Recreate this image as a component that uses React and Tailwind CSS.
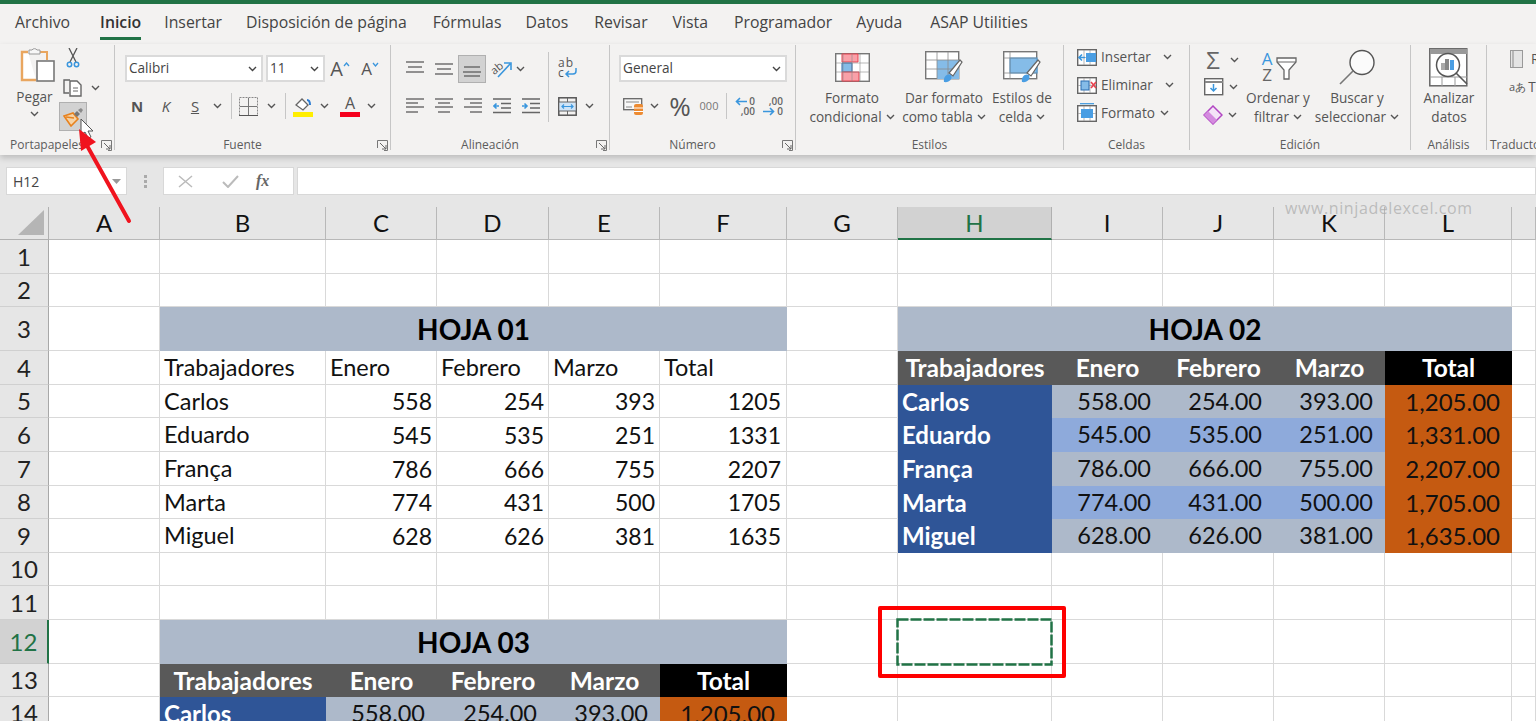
import React from "react";

const Svg = ({ w, h, children, className = "" }) => (
  <svg width={w} height={h} viewBox={`0 0 ${w} ${h}`} fill="none" className={"block shrink-0 " + className}>
    {children}
  </svg>
);
const B = "#3a96dd";
const Chev = ({ c = "#555", className = "" }) => (
  <Svg w={9} h={6} className={className}><path d="M1 1l3.5 3.5L8 1" stroke={c} strokeWidth="1.4" /></Svg>
);
const Launcher = () => (
  <Svg w={11} h={11}><path d="M.5 8V.5H10.5V10.5H7" stroke="#777" /><path d="M3 3l6 6M9 5v4H5" stroke="#666" /></Svg>
);

const Paste = () => (
  <Svg w={36} h={38}>
    <path d="M8 6H2v28h14" stroke="#e9a65f" strokeWidth="2.4" fill="#fff" />
    <path d="M20 6h7v8" stroke="#e9a65f" strokeWidth="2" />
    <path d="M9 8V4h3a3 3 0 0 1 5 0h3v4z" fill="#f7f7f7" stroke="#999" />
    <rect x="17" y="15" width="17" height="20" fill="#fff" stroke="#777" strokeWidth="1.6" />
  </Svg>
);
const Scissors = () => (
  <Svg w={14} h={20}>
    <path d="M3 0l7 14M11 0L4 14" stroke="#555" strokeWidth="1.3" />
    <circle cx="3.5" cy="16.5" r="2.2" stroke={B} strokeWidth="1.5" />
    <circle cx="10.5" cy="16.5" r="2.2" stroke={B} strokeWidth="1.5" />
  </Svg>
);
const Copy = () => (
  <Svg w={20} h={19}>
    <path d="M7 2H1v13h5" stroke="#666" strokeWidth="1.4" />
    <path d="M7 3h7l4 4v11H7z" fill="#fff" stroke="#666" strokeWidth="1.4" />
    <path d="M10 10h5M10 13h5" stroke="#666" />
  </Svg>
);
const Painter = () => (
  <Svg w={21} h={20}>
    <path d="M1 9l9-3 5 6-7 7z" fill="#f6d3a6" stroke="#e8821e" strokeWidth="1.6" />
    <path d="M3 10l8 1" stroke="#e8821e" strokeWidth="1.4" />
    <path d="M11 7l3-3 3 3-3 3z" fill="#777" />
    <path d="M15 3l3-2 2 2-2 3z" fill="#8a8a8a" />
  </Svg>
);
const Cursor = () => (
  <Svg w={16} h={22}>
    <path d="M1 1v16l4-3 3 6 3-1-3-6h5z" fill="#fff" stroke="#555" />
  </Svg>
);
const FontBig = ({ up }) => (
  <div className="flex items-start">
    <span className={(up ? "text-[20px]" : "text-[17px]") + " leading-[22px] text-[#555]"}>A</span>
    <Svg w={7} h={5} className="mt-1">
      <path d={up ? "M1 4l2.5-3L6 4" : "M1 1l2.5 3L6 1"} stroke={B} strokeWidth="1.3" />
    </Svg>
  </div>
);
const Borders = () => (
  <Svg w={19} h={19}>
    <rect x=".5" y=".5" width="18" height="18" stroke="#888" strokeDasharray="2 1" />
    <path d="M9.5 1v17M1 9.5h17" stroke="#777" />
    <path d="M0 18.5h19" stroke="#555" />
  </Svg>
);
const Fill = () => (
  <Svg w={20} h={21}>
    <path d="M3 9l6-6 6 6-5 5z" fill="#fff" stroke="#666" strokeWidth="1.3" />
    <path d="M14 4c2 0 3 2 3 5" stroke="#2b7cd3" strokeWidth="2" />
    <rect x="0" y="16" width="20" height="5" fill="#ffee00" />
  </Svg>
);
const FontColor = () => (
  <div className="flex flex-col items-center w-[20px]">
    <span className="text-[16px] leading-[16px] text-[#555]">A</span>
    <div className="w-[20px] h-[5px] bg-[#f5001d] mt-[1px]" />
  </div>
);
const Lines = ({ ws }) => (
  <Svg w={18} h={18}>
    {ws.map(([x, wd, y], i) => (
      <path key={i} d={`M${x} ${y}h${wd}`} stroke="#666" strokeWidth="1.4" />
    ))}
  </Svg>
);
const AlignBtn = ({ kind }) => {
  const s = {
    t: [[0, 18, 2], [2, 14, 7], [0, 18, 12]],
    m: [[0, 18, 4], [2, 14, 9], [0, 18, 14]],
    b: [[1, 16, 7], [0, 18, 12], [1, 16, 16]],
    l: [[0, 18, 2], [0, 12, 6], [0, 18, 10], [0, 12, 15]],
    c: [[0, 18, 2], [3, 12, 6], [0, 18, 10], [3, 12, 15]],
    r: [[0, 18, 2], [6, 12, 6], [0, 18, 10], [6, 12, 15]],
  }[kind];
  return <Lines ws={s} />;
};
const Indent = ({ rev }) => (
  <Svg w={18} h={18}>
    <path d="M0 2h18M8 6.5h10M8 11h10M0 15.5h18" stroke="#666" strokeWidth="1.4" />
    <path d={rev ? "M6 9H1m2.5-2.5L1 9l2.5 2.5" : "M0 9h5m-2.5-2.5L5 9l-2.5 2.5"} stroke={B} strokeWidth="1.6" />
  </Svg>
);
const Orient = () => (
  <Svg w={22} h={20}>
    <text x="0" y="13" transform="rotate(-40 6 10)" fontSize="11" fill="#555" fontFamily="Open Sans">ab</text>
    <path d="M7 18L19 5M13 4h7v7" stroke={B} strokeWidth="1.6" />
  </Svg>
);
const Wrap = () => (
  <div className="relative w-[20px] h-[22px] text-[12px] leading-[10px] text-[#555]">
    <div className="tracking-[1px]">ab</div>
    <div>c</div>
    <Svg w={14} h={10} className="absolute right-0 bottom-[2px]">
      <path d="M12 0v3a3 3 0 0 1-3 3H2m3-3L2 6l3 3" stroke={B} strokeWidth="1.5" />
    </Svg>
  </div>
);
const Merge = () => (
  <Svg w={19} h={19}>
    <rect x=".8" y=".8" width="17.4" height="17.4" stroke="#555" strokeWidth="1.5" />
    <rect x="1.5" y="5" width="16" height="9" fill="#cfe4f7" />
    <path d="M1 5h17M1 14h17M9.5 1v4M9.5 14v4" stroke="#666" />
    <path d="M4 9.5h11M6 7.5l-2 2 2 2M13 7.5l2 2-2 2" stroke={B} strokeWidth="1.2" />
  </Svg>
);
const Currency = () => (
  <Svg w={21} h={17}>
    <rect x=".7" y=".7" width="18" height="11" fill="#f8f8f8" stroke="#666" strokeWidth="1.3" />
    <path d="M3 4h13M3 9h6" stroke="#888" />
    <rect x="11" y="6" width="9" height="11" rx="2" fill="#ed8b32" />
    <path d="M11 10h9M11 13.5h9" stroke="#fff" />
  </Svg>
);
const DecUp = ({ rev }) => (
  <div className="relative w-[20px] h-[19px] text-[10px] leading-[9px] text-[#666] font-semibold text-right">
    <div>{rev ? ",00" : "0"}</div>
    <div className="mt-[1px]">{rev ? "0" : ",00"}</div>
    <Svg w={12} h={9} className={"absolute left-0 " + (rev ? "bottom-0" : "top-0")}>
      <path d={rev ? "M0 4.5h10M7 1l3.5 3.5L7 8" : "M12 4.5H2M5 1L1.5 4.5 5 8"} stroke={B} strokeWidth="1.6" />
    </Svg>
  </div>
);
const CondFormat = () => (
  <Svg w={35} h={29}>
    <rect x=".7" y=".7" width="33.6" height="27.6" fill="#fff" stroke="#777" strokeWidth="1.4" />
    <path d="M7 1h16v8H7z" fill="#f9a0a8" stroke="#e8414e" />
    <path d="M7 10h10v9H7z" fill="#85bce8" stroke="#2b6cb0" />
    <path d="M7 19h17v9H7z" fill="#f9a0a8" stroke="#e8414e" />
    <path d="M1 10h33M1 19h33M8 1v27M17 1v27M25 1v27" stroke="#8a8a8a" strokeWidth=".6" />
  </Svg>
);
const Brush = () => (
  <g>
    <path d="M24 22L35 9l2 2-9 14z" fill="#fff" stroke="#666" strokeWidth="1.2" />
    <path d="M19 31c-1-5 3-9 7-7 2 4-2 8-7 7z" fill="#4a9ee3" />
  </g>
);
const TableFmt = () => (
  <Svg w={38} h={33}>
    <rect x=".7" y=".7" width="33" height="27" fill="#fff" stroke="#777" strokeWidth="1.4" />
    <rect x="12" y="9" width="22" height="19" fill="#85bce8" />
    <path d="M1 9h33M1 18h33M12 1v27M23 1v27" stroke="#8a8a8a" strokeWidth=".8" />
    <Brush />
  </Svg>
);
const CellStyle = () => (
  <Svg w={38} h={33}>
    <rect x=".7" y=".7" width="33" height="27" fill="#fff" stroke="#777" strokeWidth="1.4" />
    <rect x="7" y="7" width="27" height="15" fill="#85bce8" stroke="#3a96dd" />
    <path d="M1 7h33M1 22h33M7 1v27" stroke="#8a8a8a" strokeWidth=".8" />
    <Brush />
  </Svg>
);
const CellIco = ({ kind }) => (
  <Svg w={20} h={20}>
    <rect x=".7" y="2.7" width="18.6" height="15.6" fill="#fff" stroke="#666" strokeWidth="1.4" />
    <path d="M7 3v15M13 3v15M1 10.500h18" stroke="#999" strokeWidth=".7" />
    {kind === "ins" && (
      <>
        <rect x="9" y="6" width="10" height="9" fill="#4a9ee3" />
        <path d="M8 10.500H2m3-3l-3 3 3 3" stroke="#3a96dd" strokeWidth="1.6" />
      </>
    )}
    {kind === "del" && (
      <>
        <rect x="4" y="6" width="8" height="9" fill="#85bce8" stroke="#2b6cb0" />
        <path d="M14 7l5 6M19 7l-5 6" stroke="#e8414e" strokeWidth="1.6" />
      </>
    )}
    {kind === "fmt" && (
      <>
        <rect x="4" y="6" width="12" height="9" fill="#4a9ee3" />
        <path d="M3 .700h14" stroke={B} strokeWidth="1.2" />
      </>
    )}
  </Svg>
);
const SortIco = () => (
  <div className="flex items-end">
    <div className="flex flex-col items-center w-[15px] text-[17px] leading-[16px]">
      <span className="text-[#3a96dd]">A</span>
      <span className="text-[#666]">Z</span>
    </div>
    <Svg w={21} h={24} className="ml-[1px] mb-[2px]">
      <path d="M1 1h19v4l-7 8v9h-5v-9L1 5z" fill="#fff" stroke="#666" strokeWidth="1.3" />
      <path d="M1 5h19" stroke="#666" />
    </Svg>
  </div>
);
const SearchIco = () => (
  <Svg w={37} h={37}>
    <circle cx="23" cy="13.500" r="12" fill="#fbfbfb" stroke="#555" strokeWidth="1.4" />
    <path d="M14 22L1 35" stroke="#777" strokeWidth="1.6" />
  </Svg>
);
const Analyze = () => (
  <Svg w={40} h={39}>
    <rect x=".8" y=".8" width="37" height="37" fill="#fff" stroke="#666" strokeWidth="1.5" />
    <rect x="1" y="1" width="37" height="5" fill="#999" />
    <path d="M1 29h37M13 29v9M26 29v9" stroke="#999" />
    <circle cx="19" cy="17" r="11.500" fill="#fff" stroke="#555" strokeWidth="1.5" />
    <rect x="12" y="15" width="4" height="7" fill="#aaa" />
    <rect x="16" y="11" width="4" height="11" fill="#888" />
    <rect x="21" y="12" width="4" height="10" fill="#4a9ee3" />
    <path d="M27 25l11 11" stroke="#555" strokeWidth="1.6" />
  </Svg>
);

const Group = ({ w, label, launcher, children, left }) => (
  <div className={"flex shrink-0 h-[107px] " + w}>
    <div className="flex flex-col flex-1 min-w-0">
      <div className="flex-1 min-h-0">{children}</div>
      <div className="flex items-center h-[14px]">
        <div className={"flex-1 text-[12px] leading-[14px] text-[#5c5c5c] whitespace-nowrap " + (left ? "pl-[3px]" : "text-center")}>{label}</div>
        {launcher && <div className="w-[20px] flex justify-end pr-[2px]"><Launcher /></div>}
      </div>
    </div>
    <div className="w-px h-[105px] bg-[#c6c6c6] shrink-0" />
  </div>
);
const Slot = ({ w, children, className = "" }) => (
  <div className={"flex items-center justify-center shrink-0 " + w + " " + className}>{children}</div>
);
const Select = ({ w, text }) => (
  <div className={"flex items-center justify-between bg-white border-2 border-[#dadada] h-[27px] pl-[2px] pr-[4px] text-[13.6px] text-[#444] " + w}>
    <span>{text}</span>
    <Chev c="#444" />
  </div>
);
const BigBtn = ({ w, top, l1, l2, chev, className = "" }) => (
  <div className={"flex flex-col items-center shrink-0 " + w + " " + className}>
    <div className="h-[42px] flex items-center justify-center">{top}</div>
    <div className="text-[13.6px] leading-[19px] text-[#555] whitespace-nowrap">{l1}</div>
    <div className="text-[13.6px] leading-[19px] text-[#555] whitespace-nowrap flex items-center gap-[4px]">
      {l2}
      {chev && <Chev />}
    </div>
  </div>
);
const Sep = ({ h = "h-[26px]" }) => <div className={"w-px bg-[#c6c6c6] " + h} />;
const CellRow = ({ kind, text, gap }) => (
  <div className="flex items-center h-[28px] text-[13.6px] text-[#555]">
    <CellIco kind={kind} />
    <span className="ml-[4px]">{text}</span>
    <Chev className={gap} />
  </div>
);

const Ribbon = () => (
  <div className="flex bg-[#f3f2f1] h-[111px] pt-px shadow-[0_3px_6px_rgba(0,0,0,0.18)] relative z-10 overflow-hidden">
    <Group w="w-[115px]" label="Portapapeles" launcher>
      <div className="flex">
        <div className="w-[59px] pl-[10px] flex flex-col items-center pt-[1px]">
          <div className="pl-[7px]"><Paste /></div>
          <div className="text-[13.6px] leading-[18px] text-[#555] mt-[4px]">Pegar</div>
          <Chev className="mt-[5px]" />
        </div>
        <div className="flex flex-col pt-[3px]">
          <div className="pl-[7px]"><Scissors /></div>
          <div className="flex items-center pl-[4px] mt-[10px] gap-[8px]">
            <Copy />
            <Chev />
          </div>
          <div className="mt-[5px] w-[28px] h-[29px] bg-[#d2d2d2] border border-[#b0b0b0] flex items-center justify-center">
            <Painter />
          </div>
        </div>
      </div>
    </Group>
    <Group w="w-[276px]" label="Fuente" launcher>
      <div className="pl-[10px] pt-[10px]">
        <div className="flex items-center h-[27px] gap-[3px]">
          <Select w="w-[138px]" text="Calibri" />
          <Select w="w-[59px]" text="11" />
          <Slot w="w-[24px]"><FontBig up /></Slot>
          <Slot w="w-[30px]"><FontBig /></Slot>
        </div>
        <div className="flex items-center h-[26px] mt-[11px] text-[#555]">
          <Slot w="w-[24px]" className="font-bold text-[15px]">N</Slot>
          <Slot w="w-[34px]" className="italic text-[15px]">K</Slot>
          <Slot w="w-[24px]" className="underline text-[15px]">S</Slot>
          <Slot w="w-[20px]"><Chev /></Slot>
          <Slot w="w-[8px]"><Sep /></Slot>
          <Slot w="w-[26px]"><Borders /></Slot>
          <Slot w="w-[20px]"><Chev /></Slot>
          <Slot w="w-[8px]"><Sep /></Slot>
          <Slot w="w-[28px]"><Fill /></Slot>
          <Slot w="w-[14px]"><Chev /></Slot>
          <Slot w="w-[38px]"><FontColor /></Slot>
          <Slot w="w-[4px]"><Chev /></Slot>
        </div>
      </div>
    </Group>
    <Group w="w-[219px]" label="Alineación" launcher>
      <div className="flex pl-[9px] pt-[10px]">
        <div>
          <div className="flex items-center h-[27px]">
            <Slot w="w-[29px]"><AlignBtn kind="t" /></Slot>
            <Slot w="w-[29px]"><AlignBtn kind="m" /></Slot>
            <Slot w="w-[28px] h-[28px] bg-[#d2d2d2] border border-[#b0b0b0]"><AlignBtn kind="b" /></Slot>
            <Slot w="w-[32px]"><Orient /></Slot>
            <Slot w="w-[4px]"><Chev /></Slot>
          </div>
          <div className="flex items-center h-[26px] mt-[11px]">
            <Slot w="w-[29px]"><AlignBtn kind="l" /></Slot>
            <Slot w="w-[29px]"><AlignBtn kind="c" /></Slot>
            <Slot w="w-[29px]"><AlignBtn kind="r" /></Slot>
            <Slot w="w-[29px]"><Indent rev /></Slot>
            <Slot w="w-[29px]"><Indent /></Slot>
          </div>
        </div>
        <div className="ml-[3px] mr-[9px] h-[70px] w-px bg-[#c6c6c6] -mt-[3px]" />
        <div>
          <div className="flex items-center h-[27px]"><Slot w="w-[20px]"><Wrap /></Slot></div>
          <div className="flex items-center h-[26px] mt-[11px] gap-[8px]">
            <Merge />
            <Chev />
          </div>
        </div>
      </div>
    </Group>
    <Group w="w-[186px]" label="Número" launcher>
      <div className="pl-[9px] pt-[10px]">
        <Select w="w-[168px]" text="General" />
        <div className="flex items-center h-[26px] mt-[11px]">
          <Slot w="w-[28px]"><Currency /></Slot>
          <Slot w="w-[14px]"><Chev /></Slot>
          <Slot w="w-[38px]" className="text-[26px] leading-[26px] text-[#555]">%</Slot>
          <Slot w="w-[20px]" className="text-[11px] text-[#777]">000</Slot>
          <Slot w="w-[14px]"><Sep /></Slot>
          <Slot w="w-[24px]"><DecUp /></Slot>
          <Slot w="w-[32px]"><DecUp rev /></Slot>
        </div>
      </div>
    </Group>
    <Group w="w-[268px]" label="Estilos">
      <div className="flex pt-[1px] pl-[8px]">
        <BigBtn w="w-[96px]" top={<CondFormat />} l1="Formato" l2="condicional" chev />
        <BigBtn w="w-[88px]" top={<TableFmt />} l1="Dar formato" l2="como tabla" chev />
        <BigBtn w="w-[68px]" top={<CellStyle />} l1="Estilos de" l2="celda" chev />
      </div>
    </Group>
    <Group w="w-[126px]" label="Celdas">
      <div className="pl-[13px] -mt-[2px]">
        <CellRow kind="ins" text="Insertar" gap="ml-[12px]" />
        <CellRow kind="del" text="Eliminar" gap="ml-[12px]" />
        <CellRow kind="fmt" text="Formato" gap="ml-[5px]" />
      </div>
    </Group>
    <Group w="w-[221px]" label="Edición">
      <div className="flex pl-[13px] pt-[1px]">
        <div className="w-[43px] flex flex-col pt-[2px]">
          <div className="flex items-center h-[24px] gap-[7px] text-[24px] leading-[24px] text-[#666]">
            <span className="w-[20px] text-center">Σ</span>
            <Chev />
          </div>
          <div className="flex items-center h-[30px] gap-[5px] pl-[1px]">
            <Svg w={20} h={18}>
              <rect x=".7" y=".7" width="18" height="16" fill="#fff" stroke="#666" strokeWidth="1.4" />
              <path d="M1 4h18" stroke="#888" strokeWidth="2" />
              <path d="M9.500 6v7m-3-3l3 3 3-3" stroke={B} strokeWidth="1.5" />
            </Svg>
            <Chev />
          </div>
          <div className="flex items-center h-[26px] gap-[5px]">
            <Svg w={20} h={20}>
              <path d="M10 1l9 9-9 9-9-9z" fill="#f4e3f7" stroke="#b146c2" strokeWidth="1.5" />
              <path d="M5 6l9 9-4 4-9-9z" fill="#d48bdf" />
            </Svg>
            <Chev />
          </div>
        </div>
        <BigBtn w="w-[66px]" className="-ml-[1px]" top={<SortIco />} l1="Ordenar y" l2="filtrar" chev />
        <BigBtn w="w-[90px]" className="ml-[1px]" top={<SearchIco />} l1="Buscar y" l2="seleccionar" chev />
      </div>
    </Group>
    <Group w="w-[76px]" label="Análisis">
      <BigBtn w="w-[76px]" className="pt-[1px]" top={<Analyze />} l1="Analizar" l2="datos" />
    </Group>
    <Group w="w-[60px]" label="Traductor" left>
      <div className="pl-[23px] pt-[1px] text-[13.6px] text-[#555] flex flex-col">
        <div className="flex items-center h-[24px] gap-[8px] mt-[1px]">
          <Svg w={13} h={18}><rect x=".5" y=".5" width="12" height="17" fill="#e4e4e4" stroke="#999" /><path d="M3 1v16" stroke="#888" /></Svg>
          <span>R</span>
        </div>
        <div className="flex items-center h-[32px] gap-[2px] -ml-[1px]">
          <span className="text-[11px] leading-[14px]">aあ</span>
          <span>T</span>
        </div>
      </div>
    </Group>
  </div>
);

const FormulaBar = () => (
  <div className="flex items-center h-[52px] bg-[#e6e6e6] pt-[12px] pb-[12px]">
    <div className="ml-[6px] w-[121px] h-[28px] bg-white border border-[#d8d8d8] flex items-center justify-between pl-[6px] pr-[5px] text-[14px] text-[#444]">
      <span>H12</span>
      <Svg w={9} h={5}><path d="M0 0h9L4.500 5z" fill="#999" /></Svg>
    </div>
    <div className="w-[36px] flex flex-col items-center gap-[2px]">
      <div className="w-[3px] h-[3px] bg-[#aaa]" />
      <div className="w-[3px] h-[3px] bg-[#aaa]" />
      <div className="w-[3px] h-[3px] bg-[#aaa]" />
    </div>
    <div className="w-[131px] h-[28px] bg-white border border-[#d8d8d8] flex items-center pl-[14px] text-[#aaa]">
      <Svg w={15} h={13}><path d="M1 1l13 11M14 1L1 12" stroke="#bbb" strokeWidth="1.5" /></Svg>
      <Svg w={17} h={13} className="ml-[29px]"><path d="M1 7l5 5L16 1" stroke="#bbb" strokeWidth="2" /></Svg>
      <span className="ml-[17px] italic font-bold text-[16px] text-[#666] [font-family:'Liberation_Serif',serif]">fx</span>
    </div>
    <div className="ml-[3px] flex-1 h-[28px] bg-white border border-[#d8d8d8]" />
  </div>
);

const cols = ["A", "B", "C", "D", "E", "F", "G", "H", "I", "J", "K", "L", ""];
const GL = "border-r border-b border-[#d9d9d9]";
const blank = (n) => Array.from({ length: n }, () => ({ c: GL }));
const TITLE = "col-span-5 bg-[#adb9ca] justify-center font-bold text-[28px] text-black";
const DARK = "bg-[#595959] text-white font-bold justify-center text-[24.5px] pt-px";
const BLK = "bg-black text-white font-bold justify-center text-[24.5px] pt-px";
const NAME = "bg-[#2f5597] text-white font-bold pl-[4px] text-[24px]";
const ODD = "bg-[#adb9ca] justify-end pr-[12px] text-[23.5px] text-[#111]";
const EVEN = "bg-[#8eaadb] justify-end pr-[12px] text-[23.5px] text-[#111]";
const TOT = "bg-[#c55a11] justify-end pr-[12px] text-[24px] text-[#111]";
const L = GL + " pl-[4px] pt-px text-[23.5px] text-[#111]";
const R = GL + " justify-end pr-[4px] pt-px text-[23px] text-[#111]";
const RF = GL + " justify-end pr-[5px] pt-px text-[23px] text-[#111]";

const hdr = () => [
  { t: "Trabajadores", c: DARK },
  { t: "Enero", c: DARK },
  { t: "Febrero", c: DARK },
  { t: "Marzo", c: DARK },
  { t: "Total", c: BLK },
];
const data = [
  ["Carlos", "558", "254", "393", "1205", "1,205.00"],
  ["Eduardo", "545", "535", "251", "1331", "1,331.00"],
  ["França", "786", "666", "755", "2207", "2,207.00"],
  ["Marta", "774", "431", "500", "1705", "1,705.00"],
  ["Miguel", "628", "626", "381", "1635", "1,635.00"],
];
const fx = (v) => v + ".00";
const t2 = (d, band) => [
  { t: d[0], c: NAME },
  { t: fx(d[1]), c: band },
  { t: fx(d[2]), c: band },
  { t: fx(d[3]), c: band },
  { t: d[5], c: TOT },
];

const rows = [
  blank(13),
  blank(13),
  [...blank(1), { t: "HOJA 01", c: TITLE }, ...blank(1), { t: "HOJA 02", c: TITLE }, ...blank(1)],
  [
    ...blank(1),
    { t: "Trabajadores", c: L },
    { t: "Enero", c: L },
    { t: "Febrero", c: L },
    { t: "Marzo", c: L },
    { t: "Total", c: L },
    ...blank(1),
    ...hdr(),
    ...blank(1),
  ],
  ...data.map((d, i) => [
    ...blank(1),
    { t: d[0], c: L },
    { t: d[1], c: R },
    { t: d[2], c: R },
    { t: d[3], c: R },
    { t: d[4], c: RF },
    ...blank(1),
    ...t2(d, i % 2 ? EVEN : ODD),
    ...blank(1),
  ]),
  blank(13),
  blank(13),
  [...blank(1), { t: "HOJA 03", c: TITLE }, ...blank(7)],
  [...blank(1), ...hdr(), ...blank(7)],
  [...blank(1), ...t2(data[0], ODD), ...blank(7)],
];

const Sheet = () => (
  <div className="relative grid grid-cols-[49px_111px_166px_111px_112px_111px_127px_111px_154px_111px_111px_111px_127px_24px] grid-rows-[33px_34px_33px_44px_34px_33px_34px_34px_33px_34px_33px_34px_44px_33px_33px] [font-family:Lato,'Liberation_Sans',sans-serif]">
    <div className="bg-[#e6e6e6] border-r border-b border-[#b0b0b0] flex items-end justify-end pr-[4px] pb-[4px]">
      <Svg w={26} h={25}><path d="M26 0v25H0z" fill="#b5b5b5" /></Svg>
    </div>
    {cols.map((c, i) => (
      <div
        key={i}
        className={
          "flex items-center justify-center text-[24px] " +
          (c === "H"
            ? "bg-[#d2d2d2] text-[#217346] border-b-2 border-[#217346] border-r border-r-[#b0b0b0]"
            : "bg-[#e6e6e6] text-[#111] border-r border-b border-[#b8b8b8]")
        }
      >
        {c}
      </div>
    ))}
    {rows.map((r, ri) => (
      <React.Fragment key={ri}>
        <div
          className={
            "flex items-center justify-center text-[24px] " +
            (ri === 11
              ? "bg-[#d2d2d2] text-[#217346] border-r-2 border-[#217346] border-b border-b-[#c8c8c8]"
              : "bg-[#e6e6e6] text-[#222] border-r border-r-[#a8a8a8] border-b border-b-[#d0d0d0]")
          }
        >
          {ri + 1}
        </div>
        {r.map((cell, ci) => (
          <div key={ci} className={"flex items-center leading-none whitespace-nowrap " + cell.c}>
            {cell.t}
          </div>
        ))}
      </React.Fragment>
    ))}
    <svg width="157" height="48" viewBox="0 0 157 48" fill="none" className="absolute left-[896px] top-[411px]">
      <rect x="1.500" y="1.500" width="154" height="45" stroke="#217346" strokeWidth="2.500" strokeDasharray="11 2" />
    </svg>
    <div className="absolute left-[878px] top-[399px] w-[188px] h-[72px] border-4 border-[#fe0000] rounded-[2px]" />
  </div>
);

export default function App() {
  return (
    <div className="relative w-[1536px] h-[721px] overflow-hidden bg-white [font-family:'Open_Sans','Noto_Sans',sans-serif]">
      <div className="h-[4px] bg-[#217346]" />
      <div className="flex items-start h-[40px] bg-[#f3f2f1] text-[15.8px] text-[#444] pl-[15px] pt-[8px] leading-[21px]">
        <span>Archivo</span>
        <span className="ml-[30px] font-semibold text-[#333] border-b-[3px] border-[#217346] pb-[4px]">Inicio</span>
        <span className="ml-[23px]">Insertar</span>
        <span className="ml-[24px]">Disposición de página</span>
        <span className="ml-[26px]">Fórmulas</span>
        <span className="ml-[24px]">Datos</span>
        <span className="ml-[26px]">Revisar</span>
        <span className="ml-[25px]">Vista</span>
        <span className="ml-[26px]">Programador</span>
        <span className="ml-[24px]">Ayuda</span>
        <span className="ml-[28px]">ASAP Utilities</span>
      </div>
      <Ribbon />
      <FormulaBar />
      <Sheet />
      <div className="absolute z-20 left-[80px] top-[118px]"><Cursor /></div>
      <svg width="70" height="110" viewBox="0 0 70 110" fill="none" className="absolute z-20 left-[70px] top-[120px]">
        <path d="M59 101L15 22" stroke="#f0131e" strokeWidth="4" strokeLinecap="round" />
        <path d="M9 9l17 13-15 9z" fill="#f0131e" />
      </svg>
      <div className="absolute left-[1285px] top-[198px] text-[16px] leading-[20px] tracking-[0.6px] text-[#a8a8a8]/70">www.ninjadelexcel.com</div>
    </div>
  );
}
